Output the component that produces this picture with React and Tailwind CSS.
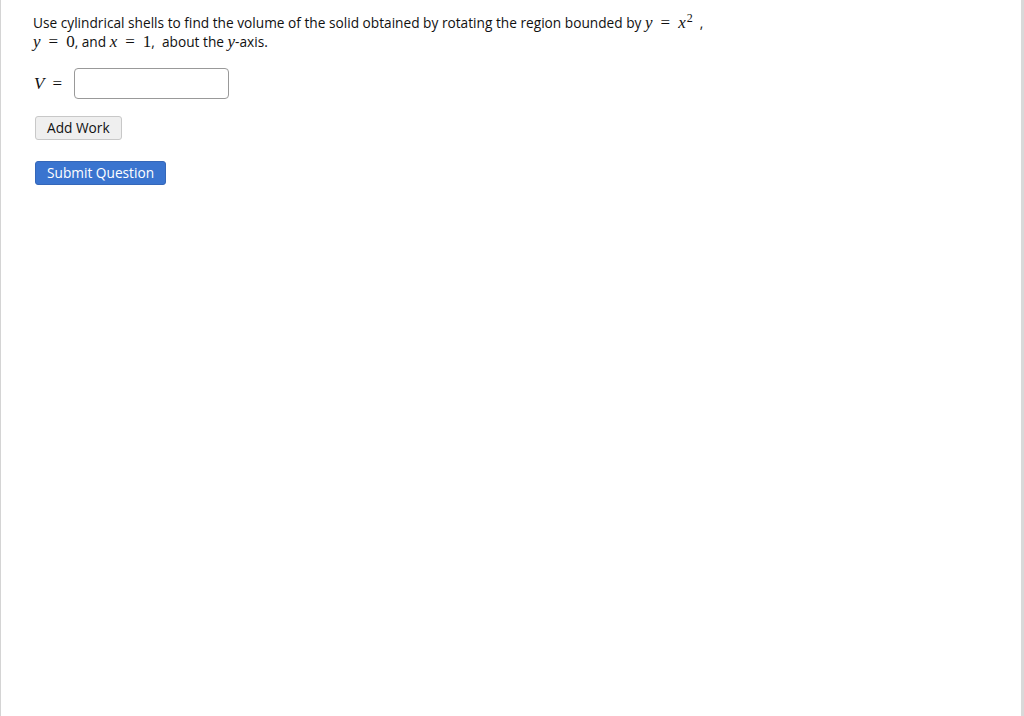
export default function App() {
  const m = "font-['Liberation_Serif',serif] italic text-[17px]";
  const n = "font-['Liberation_Serif',serif] text-[17px]";
  return (
    <div className="w-[1024px] h-[716px] bg-white border-l border-[#d4d4d4] border-r-[3px] border-r-[#d9d9d9] font-['Open_Sans',sans-serif] text-[13.7px] text-[#111] overflow-hidden">
      <div className="pl-[32px] pt-[13px]">
        <div className="leading-[19px]">
          Use cylindrical shells to find the volume of the solid obtained by rotating the region bounded by{" "}
          <span className={m}>y</span>
          <span className={`${n} mx-[8px]`}>=</span>
          <span className={m}>x</span>
          <sup className="font-['Liberation_Serif',serif] text-[12px] ml-[1px]">2</sup>
          <span className="ml-[7px]">,</span>
          <br />
          <span className={m}>y</span>
          <span className={`${n} mx-[8px]`}>=</span>
          <span className={n}>0</span>, and{" "}
          <span className={m}>x</span>
          <span className={`${n} mx-[8px]`}>=</span>
          <span className={n}>1</span>, &nbsp;about the <span className={m}>y</span>-axis.
        </div>
        <div className="flex items-center mt-[17px] h-[31px]">
          <span className={`${m} ml-[1px]`}>V</span>
          <span className={`${n} ml-[8px]`}>=</span>
          <div className="ml-[12px] w-[155px] h-[31px] border border-[#999] rounded-[4px] bg-white"></div>
        </div>
        <button className="mt-[17px] ml-[2px] block h-[24px] px-[11px] bg-[#efefef] border border-[#c8c8c8] rounded-[3px] text-[13.7px] text-[#111] leading-none">
          Add Work
        </button>
        <button className="mt-[21px] ml-[2px] block h-[24px] px-[11px] bg-[#3a74cf] border border-[#3567b8] rounded-[3px] text-[13.7px] text-white leading-none">
          Submit Question
        </button>
      </div>
    </div>
  );
}
